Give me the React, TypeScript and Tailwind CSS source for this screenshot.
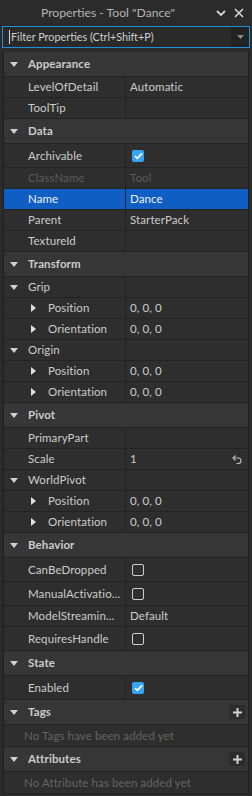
import React from 'react';

type Row =
  | { t: 'h'; label: string; plus?: boolean }
  | {
      t: 'p';
      label: string;
      value?: string;
      lvl?: 0 | 1;
      exp?: 'down' | 'right';
      dim?: boolean;
      sel?: boolean;
      check?: boolean;
      reset?: boolean;
    }
  | { t: 'n'; text: string };

const rows: Row[] = [
  { t: 'h', label: 'Appearance' },
  { t: 'p', label: 'LevelOfDetail', value: 'Automatic' },
  { t: 'p', label: 'ToolTip' },
  { t: 'h', label: 'Data' },
  { t: 'p', label: 'Archivable', check: true },
  { t: 'p', label: 'ClassName', value: 'Tool', dim: true },
  { t: 'p', label: 'Name', value: 'Dance', sel: true },
  { t: 'p', label: 'Parent', value: 'StarterPack' },
  { t: 'p', label: 'TextureId' },
  { t: 'h', label: 'Transform' },
  { t: 'p', label: 'Grip', exp: 'down' },
  { t: 'p', label: 'Position', value: '0, 0, 0', lvl: 1, exp: 'right' },
  { t: 'p', label: 'Orientation', value: '0, 0, 0', lvl: 1, exp: 'right' },
  { t: 'p', label: 'Origin', exp: 'down' },
  { t: 'p', label: 'Position', value: '0, 0, 0', lvl: 1, exp: 'right' },
  { t: 'p', label: 'Orientation', value: '0, 0, 0', lvl: 1, exp: 'right' },
  { t: 'h', label: 'Pivot' },
  { t: 'p', label: 'PrimaryPart' },
  { t: 'p', label: 'Scale', value: '1', reset: true },
  { t: 'p', label: 'WorldPivot', exp: 'down' },
  { t: 'p', label: 'Position', value: '0, 0, 0', lvl: 1, exp: 'right' },
  { t: 'p', label: 'Orientation', value: '0, 0, 0', lvl: 1, exp: 'right' },
  { t: 'h', label: 'Behavior' },
  { t: 'p', label: 'CanBeDropped', check: false },
  { t: 'p', label: 'ManualActivatio...', check: false },
  { t: 'p', label: 'ModelStreamin...', value: 'Default' },
  { t: 'p', label: 'RequiresHandle', check: false },
  { t: 'h', label: 'State' },
  { t: 'p', label: 'Enabled', check: true },
  { t: 'h', label: 'Tags', plus: true },
  { t: 'n', text: 'No Tags have been added yet' },
  { t: 'h', label: 'Attributes', plus: true },
  { t: 'n', text: 'No Attribute has been added yet' },
];

const Down = () => (
  <svg width="8" height="5" viewBox="0 0 8 5">
    <polygon points="0,0 8,0 4,5" fill="#d0d0d0" />
  </svg>
);

const Right = () => (
  <svg width="5" height="8" viewBox="0 0 5 8">
    <polygon points="0,0 5,4 0,8" fill="#e0e0e0" />
  </svg>
);

const Check = ({ on }: { on: boolean }) =>
  on ? (
    <div className="w-[12px] h-[12px] rounded-[2px] bg-[#35a4f4] flex items-center justify-center">
      <svg width="9" height="8" viewBox="0 0 9 8">
        <path d="M1 4.2 3.4 6.4 8 1.4" stroke="#fff" strokeWidth="1.7" fill="none" />
      </svg>
    </div>
  ) : (
    <div className="w-[12px] h-[12px] rounded-[2px] border border-[#cfcfcf]" />
  );

const Reset = () => (
  <svg width="12" height="11" viewBox="0 0 24 22" fill="none" stroke="#b8b8b8" strokeWidth="2.4">
    <path d="M9 13 4 8l5-5" />
    <path d="M4 8h10.5a5.5 5.5 0 0 1 0 11H11" />
  </svg>
);

function PropRow({ r }: { r: Extract<Row, { t: 'p' }> }) {
  const h = r.check !== undefined ? 'h-[24px]' : 'h-[21px]';
  const bg = r.sel ? 'bg-[#0e5ec4]' : 'bg-[#2e2e2e]';
  const labelColor = r.dim ? 'text-[#5a5a5a]' : r.sel ? 'text-[#f2f2f2]' : 'text-[#cccccc]';
  return (
    <div className={`flex ${h} ${bg} border-b border-[#232323]`}>
      <div className={`w-[122px] shrink-0 flex items-center border-r border-[#232323] ${labelColor}`}>
        {r.lvl === 1 ? (
          <div className="w-[44px] shrink-0 pl-[27px] flex items-center">{r.exp && <Right />}</div>
        ) : (
          <div className="w-[24px] shrink-0 pl-[6px] flex items-center">{r.exp && <Down />}</div>
        )}
        <span className="whitespace-nowrap">{r.label}</span>
      </div>
      <div className={`flex-1 flex items-center pl-[4px] pr-[5px] ${labelColor}`}>
        {r.check !== undefined ? (
          <div className="pl-[2px]">
            <Check on={r.check} />
          </div>
        ) : (
          <span className="flex-1 whitespace-nowrap">{r.value}</span>
        )}
        {r.reset && <Reset />}
      </div>
    </div>
  );
}

export default function App() {
  return (
    <div
      className="w-[252px] h-[796px] bg-[#2b2b2b] overflow-hidden text-[11.5px] tracking-[0.1px] select-none"
      style={{ fontFamily: 'Lato, "Open Sans", sans-serif' }}
    >
      <div className="h-[25px] flex items-center">
        <div className="w-[216px] text-center text-[12.2px] tracking-normal text-[#b4b4b4] pt-[2px] whitespace-nowrap">
          Properties - Tool "Dance"
        </div>
        <div className="flex items-center gap-[8px] pt-[1px]">
          <svg width="10" height="7" viewBox="0 0 10 7">
            <path d="M1 1 5 5 9 1" stroke="#d6d6d6" strokeWidth="1.8" fill="none" />
          </svg>
          <svg width="10" height="10" viewBox="0 0 10 10">
            <path d="M1 1 9 9M9 1 1 9" stroke="#d6d6d6" strokeWidth="1.6" fill="none" />
          </svg>
        </div>
      </div>

      <div className="mx-[2px] mt-[1px] h-[22px] border border-[#1e8fd8] bg-[#2a2a2a] flex items-stretch">
        <div className="flex-1 flex items-center pl-[6px] text-[#cfcfcf] text-[10.8px] tracking-normal">
          <span className="w-px h-[14px] bg-[#d8d8d8] mr-[1px]" />
          <span className="whitespace-nowrap">Filter Properties (Ctrl+Shift+P)</span>
        </div>
        <div className="w-[18px] bg-[#222222] flex items-center justify-center">
          <svg width="7" height="4" viewBox="0 0 7 4">
            <polygon points="0,0 7,0 3.5,4" fill="#8a8a8a" />
          </svg>
        </div>
      </div>

      <div className="mt-[4px] mx-[3px] border-x border-[#1f1f1f]">
        {rows.map((r, i) => {
          if (r.t === 'h')
            return (
              <div key={i} className="h-[25px] bg-[#363636] border-b border-[#232323] flex items-center pr-[3px]">
                <div className="w-[24px] shrink-0 pl-[6px] flex items-center">
                  <Down />
                </div>
                <span className="flex-1 font-bold text-[#cccccc]">{r.label}</span>
                {r.plus && (
                  <div className="w-[16px] h-[14px] bg-[#2c2c2c] flex items-center justify-center">
                    <svg width="9" height="9" viewBox="0 0 9 9">
                      <path d="M4.5 0v9M0 4.5h9" stroke="#d0d0d0" strokeWidth="2" />
                    </svg>
                  </div>
                )}
              </div>
            );
          if (r.t === 'n')
            return (
              <div
                key={i}
                className="h-[22px] bg-[#2e2e2e] border-b border-[#232323] flex items-center pl-[20px] text-[#646464] whitespace-nowrap"
              >
                {r.text}
              </div>
            );
          return <PropRow key={i} r={r} />;
        })}
      </div>
    </div>
  );
}
